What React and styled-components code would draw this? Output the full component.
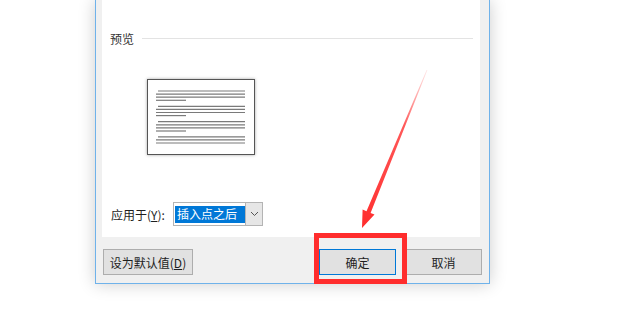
import styled, { createGlobalStyle } from "styled-components";

const GlobalStyle = createGlobalStyle`
  html, body {
    margin: 0;
    padding: 0;
    background: #ffffff;
  }
  body {
    font-family: "Noto Sans CJK SC", "Noto Sans", sans-serif;
    font-size: 12px;
    color: #1e1e1e;
  }
`;

const Page = styled.div`
  position: relative;
  width: 620px;
  height: 331px;
  overflow: hidden;
  background: #fff;
`;

const Dialog = styled.div`
  margin-left: 95px;
  width: 395px;
  height: 284px;
  box-sizing: border-box;
  background: #f0f0f0;
  border: 1px solid #6fb2ea;
  border-top: none;
  box-shadow: 0 0 16px rgba(0, 0, 0, 0.2);
  padding: 0 9px 8px 6px;
  display: flex;
  flex-direction: column;
`;

const Panel = styled.div`
  height: 237px;
  box-sizing: border-box;
  background: #fff;
  padding: 30px 7px 11px 8px;
  display: flex;
  flex-direction: column;
`;

const SectionHead = styled.div`
  display: flex;
  align-items: center;
  height: 16px;
  gap: 8px;
  color: #333;
`;

const Rule = styled.div`
  flex: 1;
  height: 1px;
  background: #e3e3e3;
`;

const Thumb = styled.div`
  margin: 33px 0 0 37px;
  width: 108px;
  height: 76px;
  box-sizing: border-box;
  border: 1px solid #555;
  background: #fff;
  box-shadow: 0 0 3px rgba(0, 0, 0, 0.35);
`;

const ApplyRow = styled.div`
  margin-top: 47px;
  display: flex;
  align-items: center;
  padding-left: 1px;
`;

const FieldLabel = styled.span`
  width: 62px;
  color: #1e1e1e;
`;

const Key = styled.span`
  text-decoration: underline;
`;

const Combo = styled.div`
  display: flex;
  width: 90px;
  height: 24px;
  box-sizing: border-box;
  border: 1px solid #b4b4b4;
  background: #fff;
`;

const ComboValue = styled.div`
  flex: 1;
  padding: 3px 0 2px 1px;
  display: flex;
`;

const Selected = styled.span`
  background: #0078d7;
  color: #fff;
  line-height: 15px;
  padding: 0 2px;
  width: 66px;
`;

const ComboButton = styled.div`
  width: 17px;
  background: #e6e6e6;
  border-left: 1px solid #b4b4b4;
  display: flex;
  align-items: center;
  justify-content: center;
`;

const Footer = styled.div`
  display: flex;
  align-items: center;
  margin: 12px -2px 0 1px;
  gap: 9px;
`;

const Button = styled.div`
  width: ${(p) => p.$w || 77}px;
  height: 26px;
  box-sizing: border-box;
  background: #e1e1e1;
  border: 1px solid ${(p) => (p.$primary ? "#0078d7" : "#adadad")};
  display: flex;
  align-items: center;
  justify-content: center;
  color: #1e1e1e;
  margin-left: ${(p) => (p.$push ? "auto" : "0")};
`;

const Highlight = styled.div`
  position: absolute;
  left: 314px;
  top: 233px;
  width: 93px;
  height: 51px;
  box-sizing: border-box;
  border: 5px solid #ff2d2d;
  pointer-events: none;
`;

const Overlay = styled.svg`
  position: absolute;
  left: 0;
  top: 0;
  pointer-events: none;
`;

const paragraphs = [11, 26.3, 41.7];

const PageLines = () => (
  <svg width="106" height="74" viewBox="0 0 106 74">
    <g stroke="#7a7a7a" strokeWidth="1.2">
      {paragraphs.map((y) => (
        <g key={y}>
          <line x1="10" y1={y} x2="97" y2={y} />
          <line x1="8" y1={y + 3.1} x2="97" y2={y + 3.1} />
          <line x1="8" y1={y + 6.2} x2="97" y2={y + 6.2} />
          <line x1="8" y1={y + 9.3} x2="38" y2={y + 9.3} />
        </g>
      ))}
      <line x1="10" y1="56.8" x2="97" y2="56.8" />
      <line x1="8" y1="59.9" x2="97" y2="59.9" />
      <line x1="8" y1="63" x2="97" y2="63" />
    </g>
  </svg>
);

const Arrow = () => (
  <Overlay width="620" height="331" viewBox="0 0 620 331">
    <defs>
      <linearGradient id="arrowFade" x1="427" y1="70" x2="362" y2="228" gradientUnits="userSpaceOnUse">
        <stop offset="0" stopColor="#ff6060" stopOpacity="0.15" />
        <stop offset="0.35" stopColor="#ff3b3b" stopOpacity="0.85" />
        <stop offset="1" stopColor="#ff2d2d" />
      </linearGradient>
    </defs>
    <polygon
      fill="url(#arrowFade)"
      points="427.4,70 426.6,70 366.5,211.3 362.6,209.6 362,228 374.5,214.5 370.6,213"
    />
  </Overlay>
);

export default function App() {
  return (
    <Page>
      <GlobalStyle />
      <Dialog>
        <Panel>
          <SectionHead>
            <span>预览</span>
            <Rule />
          </SectionHead>
          <Thumb>
            <PageLines />
          </Thumb>
          <ApplyRow>
            <FieldLabel>
              应用于(<Key>Y</Key>):
            </FieldLabel>
            <Combo>
              <ComboValue>
                <Selected>插入点之后</Selected>
              </ComboValue>
              <ComboButton>
                <svg width="9" height="6" viewBox="0 0 9 6">
                  <polyline points="1,1 4.5,4.5 8,1" fill="none" stroke="#555" strokeWidth="1" />
                </svg>
              </ComboButton>
            </Combo>
          </ApplyRow>
        </Panel>
        <Footer>
          <Button $w={90}>
            设为默认值(<Key>D</Key>)
          </Button>
          <Button $push $primary>
            确定
          </Button>
          <Button>取消</Button>
        </Footer>
      </Dialog>
      <Highlight />
      <Arrow />
    </Page>
  );
}
